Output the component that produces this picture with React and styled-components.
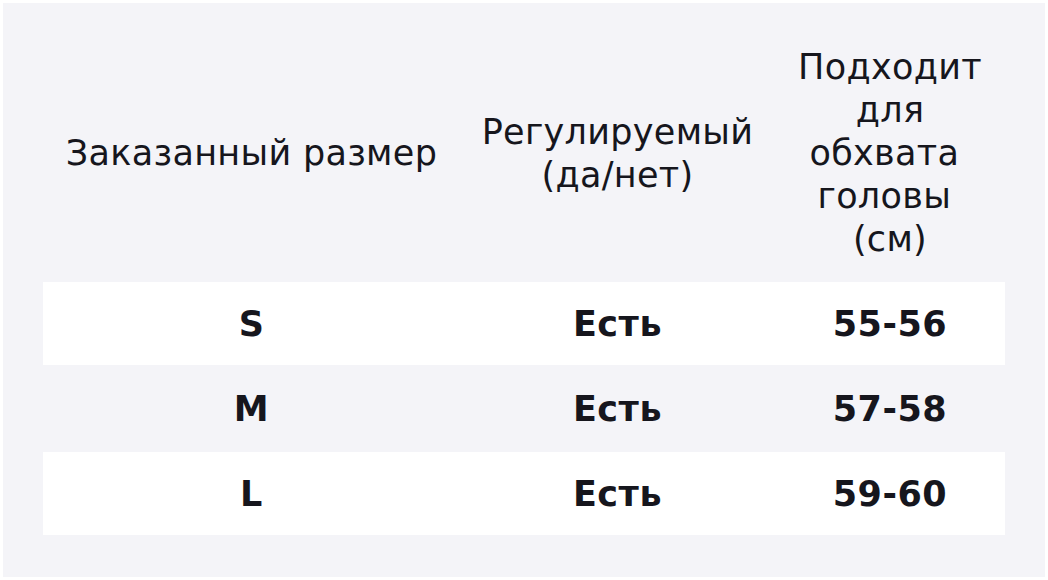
import React from "react";
import styled, { createGlobalStyle } from "styled-components";

const GlobalStyle = createGlobalStyle`
  html, body {
    margin: 0;
    padding: 0;
    background: #ffffff;
  }
  body {
    font-family: "DejaVu Sans", "Noto Sans", sans-serif;
    color: #16161d;
  }
`;

const sizes = [
  { size: "S", adjustable: "Есть", head: "55-56" },
  { size: "M", adjustable: "Есть", head: "57-58" },
  { size: "L", adjustable: "Есть", head: "59-60" },
];

const Page = styled.div`
  padding: 3px;
  width: 1048px;
  height: 580px;
  box-sizing: border-box;
`;

const Panel = styled.div`
  height: 100%;
  box-sizing: border-box;
  background: #f4f4f8;
  padding: 40px 40px 0 40px;
`;

const Table = styled.table`
  width: 962px;
  border-collapse: collapse;
  table-layout: fixed;
`;

const HeadCell = styled.th`
  width: ${(props) => props.w}px;
  height: 239px;
  box-sizing: border-box;
  padding: 0 18px 18px 18px;
  font-size: 35px;
  font-weight: 400;
  line-height: 43px;
  text-align: center;
  vertical-align: middle;
  letter-spacing: 0.3px;
`;

const Row = styled.tr`
  background: ${(props) => (props.odd ? "#ffffff" : "transparent")};
`;

const Cell = styled.td`
  height: ${(props) => props.h}px;
  padding: 0 18px;
  font-size: 35px;
  font-weight: 700;
  text-align: center;
  vertical-align: middle;
  letter-spacing: 0.5px;
`;

export default function App() {
  return (
    <Page>
      <GlobalStyle />
      <Panel>
        <Table>
          <thead>
            <tr>
              <HeadCell w={417}>Заказанный размер</HeadCell>
              <HeadCell w={315}>Регулируемый (да/нет)</HeadCell>
              <HeadCell w={230}>{"Подходит для обхвата\u00a0 головы\u00a0 (см)"}</HeadCell>
            </tr>
          </thead>
          <tbody>
            {sizes.map((item, index) => (
              <Row key={item.size} odd={index % 2 === 0}>
                <Cell h={index === 1 ? 87 : 83}>{item.size}</Cell>
                <Cell h={index === 1 ? 87 : 83}>{item.adjustable}</Cell>
                <Cell h={index === 1 ? 87 : 83}>{item.head}</Cell>
              </Row>
            ))}
          </tbody>
        </Table>
      </Panel>
    </Page>
  );
}
